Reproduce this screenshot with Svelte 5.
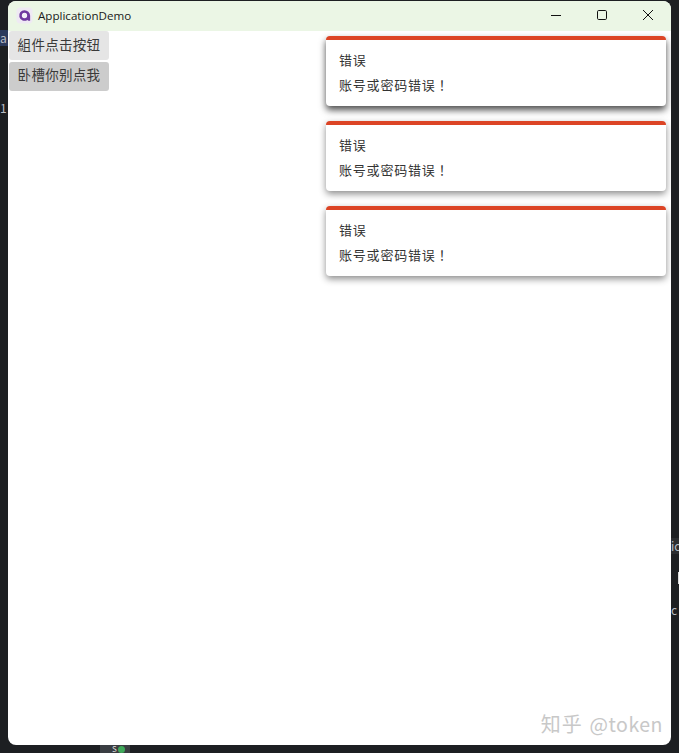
<script lang="ts">
const buttons = [
	{ label: "組件点击按钮", hover: false },
	{ label: "卧槽你别点我", hover: true },
];
const messages = [
	{ title: "错误", text: "账号或密码错误", strong: true },
	{ title: "错误", text: "账号或密码错误", strong: false },
	{ title: "错误", text: "账号或密码错误", strong: false },
];
</script>

<div class="desktop">
	<div class="behind-left">
		<span class="tab-blue">a</span>
		<span class="line-no">1</span>
	</div>
	<div class="behind-right">
		<span class="side-a">ic</span>
		<span class="side-b"></span>
		<span class="side-c">c</span>
	</div>
	<div class="taskicon"><span class="dot"></span><span class="s">S</span></div>

	<div class="window">
		<header class="titlebar">
			<svg class="logo" width="17" height="17" viewBox="0 0 16 16">
				<rect x="0.5" y="0.5" width="15" height="15" rx="3.5" fill="#efe9f4" />
				<path d="M8 3a5 5 0 1 0 2.7 9.2l1 .8h1.6V8A5.3 5.3 0 0 0 8 3Z" fill="#6f3a9f" />
				<circle cx="8" cy="8" r="2.5" fill="#f4f0f8" />
			</svg>
			<span class="title">ApplicationDemo</span>
			<div class="controls">
				<button class="ctl" aria-label="Minimize">
					<svg width="12" height="12" viewBox="0 0 12 12"><path d="M1 6.5h10" stroke="#111" fill="none" /></svg>
				</button>
				<button class="ctl" aria-label="Maximize">
					<svg width="12" height="12" viewBox="0 0 12 12"><rect x="1.5" y="1.5" width="9" height="9" rx="1.2" stroke="#111" fill="none" /></svg>
				</button>
				<button class="ctl" aria-label="Close">
					<svg width="12" height="12" viewBox="0 0 12 12"><path d="M1 1l10 10M11 1L1 11" stroke="#111" fill="none" /></svg>
				</button>
			</div>
		</header>

		<main class="content">
			{#each buttons as b}
				<button class="btn" class:hover={b.hover}>{b.label}</button>
			{/each}
			<div class="notifications">
				{#each messages as m}
					<div class="note" class:strong={m.strong}>
						<div class="note-title">{m.title}</div>
						<div class="note-text">{m.text}<span class="bang">！</span></div>
					</div>
				{/each}
			</div>
			<div class="watermark"><span class="wm-cn">知乎</span> @token</div>
		</main>
	</div>
</div>

<style>
	:global(body) {
		margin: 0;
		background: #1d1f22;
	}

	.desktop {
		position: relative;
		width: 679px;
		height: 753px;
		overflow: hidden;
		background: #1d1f22;
		font-family: "Noto Sans CJK SC", "Noto Sans", sans-serif;
	}

	.window {
		position: absolute;
		left: 8px;
		top: 1px;
		width: 663px;
		height: 744px;
		display: flex;
		flex-direction: column;
		background: #fff;
		border-radius: 8px;
		overflow: hidden;
	}

	.titlebar {
		box-sizing: border-box;
		height: 30px;
		flex: none;
		display: flex;
		align-items: center;
		padding: 0 0 2px 8px;
		background: #ebf6e5;
	}

	.logo {
		flex: none;
	}

	.title {
		margin-left: 5px;
		font-family: "Open Sans", "Noto Sans", sans-serif;
		font-size: 11.6px;
		color: #1a1a1a;
	}

	.controls {
		margin-left: auto;
		display: flex;
	}

	.ctl {
		width: 46px;
		height: 28px;
		padding: 0;
		border: 0;
		background: none;
		display: flex;
		align-items: center;
		justify-content: center;
	}

	.content {
		position: relative;
		flex: 1;
		display: flex;
		flex-direction: column;
		align-items: flex-start;
		gap: 2px;
		padding-left: 1px;
	}

	.btn {
		height: 29px;
		width: 100px;
		padding: 0 0 3px;
		border: 0;
		border-radius: 3px;
		background: #e5e5e5;
		color: #3a3a3a;
		font-family: inherit;
		font-size: 13.5px;
		letter-spacing: 0.3px;
	}

	.btn.hover {
		padding-bottom: 5px;
		background: #cccccc;
	}

	.notifications {
		position: absolute;
		top: 5px;
		right: 5px;
		width: 340px;
		display: flex;
		flex-direction: column;
		gap: 15px;
	}

	.note {
		box-sizing: border-box;
		height: 70px;
		padding: 11px 13px 0;
		border-top: 4px solid #dc4425;
		border-radius: 4px;
		background: #fff;
		color: #333;
		font-size: 13px;
		box-shadow: 0 3px 7px rgba(0, 0, 0, 0.45);
	}

	.note.strong {
		box-shadow: 0 4px 7px rgba(0, 0, 0, 0.7);
	}

	.note-title {
		height: 25px;
		line-height: 18px;
		letter-spacing: 0.7px;
	}

	.note-text {
		line-height: 18px;
		letter-spacing: 0.8px;
	}

	.bang {
		font-family: "Noto Sans CJK TC", sans-serif;
	}

	.watermark {
		position: absolute;
		right: 8px;
		bottom: 9px;
		font-size: 19.5px;
		line-height: 24px;
		color: #c8c8c8;
		letter-spacing: 0.5px;
		white-space: nowrap;
	}

	.wm-cn {
		margin-right: 2px;
		font-size: 20px;
		letter-spacing: 1px;
	}

	.behind-left span,
	.behind-right span {
		position: absolute;
		font-size: 12px;
		line-height: 16px;
		color: #b8bcc4;
	}

	.tab-blue {
		left: 0;
		top: 30px;
		width: 8px;
		height: 16px;
		background: #2c3a5c;
	}

	.line-no {
		left: 0;
		top: 100px;
	}

	.side-a {
		left: 671px;
		top: 538px;
		width: 8px;
		background: #2b2d30;
	}

	.side-b {
		left: 678px;
		top: 572px;
		width: 1px;
		height: 12px;
		background: #ddd;
	}

	.side-c {
		left: 671px;
		top: 602px;
	}

	.taskicon {
		position: absolute;
		left: 100px;
		top: 745px;
		width: 30px;
		height: 8px;
		background: #3a3d42;
	}

	.dot {
		position: absolute;
		left: 18px;
		top: 1px;
		width: 7px;
		height: 7px;
		border-radius: 50%;
		background: #3fa95a;
	}

	.s {
		position: absolute;
		left: 12px;
		top: 0;
		font-size: 8px;
		line-height: 8px;
		color: #ddd;
	}
</style>
